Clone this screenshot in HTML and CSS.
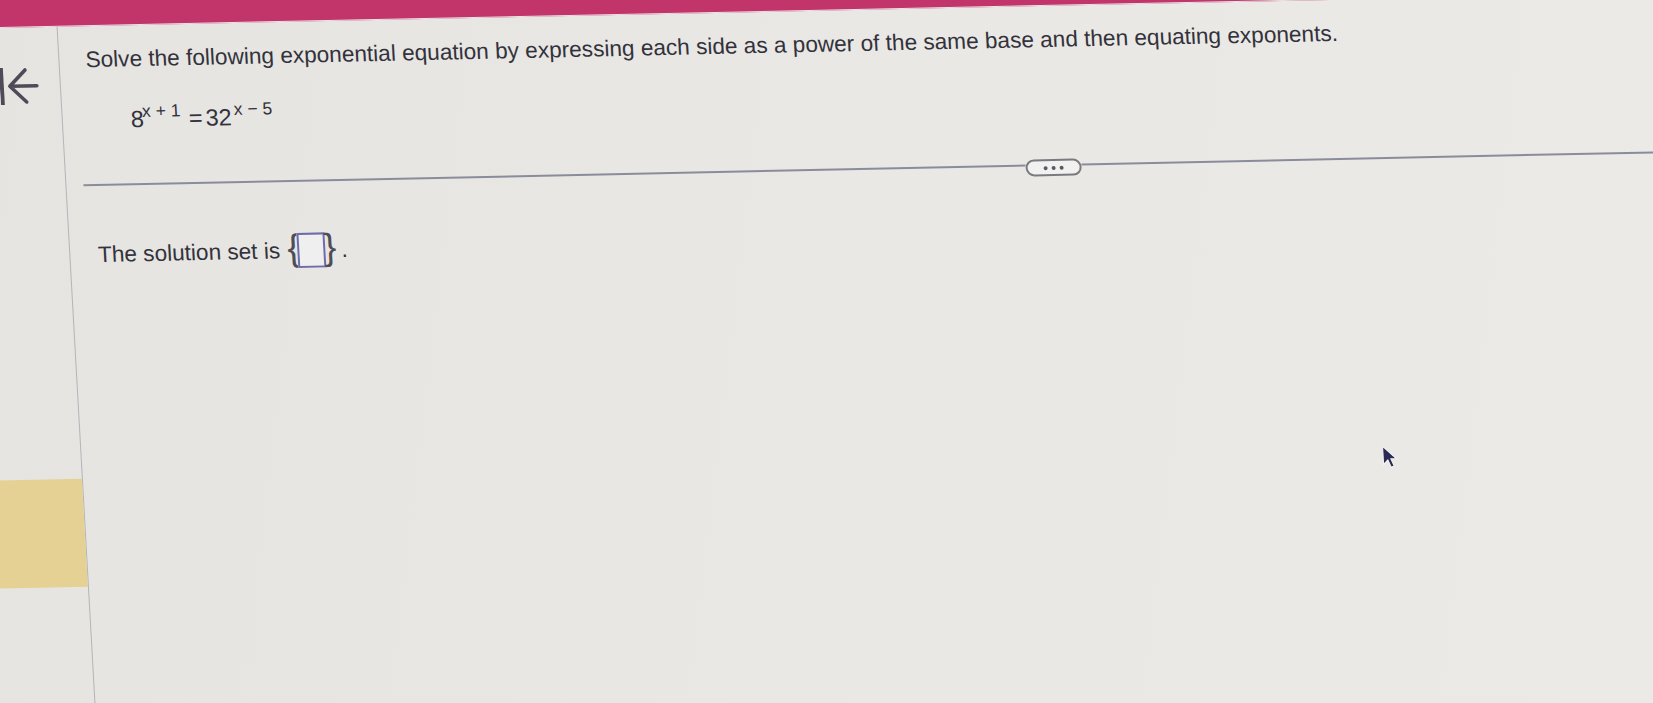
FILE: index.html
```html
<!DOCTYPE html>
<html lang="en">
<head>
<meta charset="utf-8">
<title>Exponential equation</title>
<link rel="stylesheet" href="styles.css">
</head>
<body>
<div class="screen">
  <header class="topbar"></header>
  <div class="layout">
    <aside class="sidebar">
      <button class="nav-first" aria-label="First question">
        <svg width="40" height="38" viewBox="0 0 40 38">
          <path d="M2 0 V37" stroke="#4c4b57" stroke-width="4"/>
          <path d="M37 18.5 H10 M26 2.5 L10 18.5 L26 34.5" stroke="#4c4b57" stroke-width="3.6" fill="none" stroke-linecap="round" stroke-linejoin="round"/>
        </svg>
      </button>
      <div class="flag"></div>
    </aside>
    <main class="content">
      <p class="prompt">Solve the following exponential equation by expressing each side as a power of the same base and then equating exponents.</p>
      <div class="equation"><span>8</span><sup class="exp-a">x + 1</sup><span class="eq">=</span><span>32</span><sup class="exp-b">x − 5</sup></div>
      <div class="separator">
        <span class="rule rule-left"></span>
        <button class="more" aria-label="More"><i></i><i></i><i></i></button>
        <span class="rule rule-right"></span>
      </div>
      <p class="answer">The solution set is<span class="brace brace-open">{</span><span class="answer-box"></span><span class="brace brace-close">}</span><span class="period">.</span></p>
    </main>
  </div>
  <svg class="cursor" width="16" height="24" viewBox="0 0 16 24">
    <path d="M1 1 L1 19 L5.5 14.5 L8.5 22 L11.5 20.8 L8.5 13.5 L14 13.5 Z" fill="#2b2a55" stroke="#f4f4f6" stroke-width="1"/>
  </svg>
</div>
</body>
</html>
```

FILE: styles.css
```css
html, body {
  margin: 0;
  padding: 0;
}
body {
  overflow: hidden;
  background: #e6e5e1;
  font-family: "Liberation Sans", Arial, sans-serif;
}
.screen {
  position: relative;
  width: 1760px;
  height: 760px;
  transform-origin: 0 0;
  transform: matrix(1, -0.021, 0.056, 1, -45, 0.84);
  background: linear-gradient(100deg, #e5e4e0 0%, #e9e8e4 50%, #ebeae6 100%);
}
.topbar {
  height: 27px;
  background: #c1356b;
  border-bottom: 1px solid #ece2e6;
}
.layout {
  display: flex;
  height: 732px;
}
.sidebar {
  width: 100px;
  flex: 0 0 100px;
  border-right: 1.5px solid #b4b4ba;
  display: flex;
  flex-direction: column;
  align-items: flex-start;
}
.nav-first {
  display: block;
  margin: 40px 0 0 40px;
  padding: 0;
  border: 0;
  background: none;
  width: 40px;
  height: 38px;
}
.nav-first svg {
  display: block;
}
.flag {
  align-self: stretch;
  margin-top: 373.5px;
  height: 108px;
  background: #e5d194;
}
.content {
  flex: 1;
  padding: 20.2px 0 0 26.1px;
  color: #33323c;
  font-size: 22.6px;
  line-height: 28px;
}
.prompt {
  margin: 0;
  white-space: nowrap;
}
.equation {
  margin: 32px 0 0 42px;
  font-size: 23.5px;
}
.equation sup {
  font-size: 17.5px;
  line-height: 0;
  vertical-align: 10px;
}
.exp-a {
  margin-left: -1.6px;
}
.exp-b {
  margin-left: 2.5px;
}
.eq {
  margin: 0 3px 0 8px;
}
.separator {
  display: flex;
  align-items: flex-start;
  height: 17px;
  margin: 45.3px 0 0 -9.6px;
}
.rule {
  height: 2px;
  margin-top: 4.5px;
  background: #8b8c9b;
}
.rule-left {
  flex: 0 0 942px;
}
.rule-right {
  flex: 1;
}
.more {
  flex: 0 0 56px;
  width: 56px;
  height: 17px;
  box-sizing: border-box;
  padding: 0;
  border: 2px solid #7a7a80;
  border-radius: 9px;
  background: #f1f1f0;
  display: flex;
  align-items: center;
  justify-content: center;
  gap: 4px;
}
.more i {
  display: block;
  width: 4px;
  height: 4px;
  border-radius: 50%;
  background: #5a5a64;
}
.answer {
  margin: 40.5px 0 0 1.5px;
}
.brace {
  font-size: 37px;
  line-height: 0;
  vertical-align: -2px;
  color: #4d4c57;
}
.brace-open {
  margin-left: 7.5px;
}
.brace-close {
  margin-left: -1px;
}
.answer-box {
  display: inline-block;
  width: 28px;
  height: 35px;
  box-sizing: border-box;
  border: 2px solid #6e6cab;
  background: #efeff0;
  vertical-align: -10px;
  margin-left: -3px;
}
.period {
  margin-left: 5px;
}
.cursor {
  position: absolute;
  left: 1400px;
  top: 474px;
}
```
